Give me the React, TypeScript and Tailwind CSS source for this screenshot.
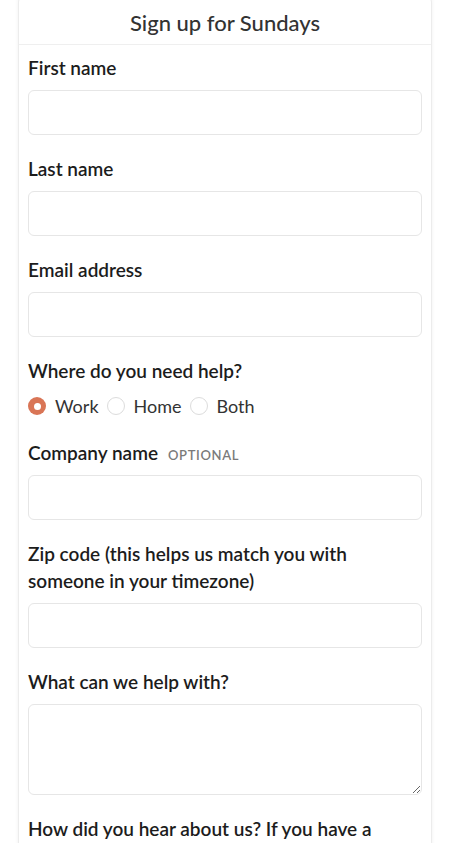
import React, { useState } from "react";

const font = { fontFamily: "Lato, 'Noto Sans', sans-serif" };

function Field({
  label,
  optional,
  children,
}: {
  label: React.ReactNode;
  optional?: boolean;
  children: React.ReactNode;
}) {
  return (
    <div className="flex flex-col gap-[9px]">
      <label className="text-[19px] leading-[27px] font-semibold text-[#1c1c1c]">
        {label}
        {optional && (
          <span className="ml-[10px] text-[13px] leading-none font-semibold tracking-[0.05em] text-[#7a7a7a]">
            OPTIONAL
          </span>
        )}
      </label>
      {children}
    </div>
  );
}

const inputClass =
  "w-full h-[45px] rounded-[6px] border border-[#e6e6e6] bg-white px-3 text-[16px] outline-none";

export default function App() {
  const [where, setWhere] = useState("work");

  return (
    <div className="min-h-[843px] bg-white" style={font}>
      <div className="mx-[18px] -mt-[6px] rounded-[8px] border border-[#ececec] bg-white shadow-[0_0_4px_rgba(0,0,0,0.06)]">
        <div className="h-[50px] pt-[6px] flex items-center justify-center border-b border-[#efefef]">
          <h1 className="text-[22px] font-medium text-[#333]">Sign up for Sundays</h1>
        </div>

        <div className="px-[9px] pt-[9px] pb-6 flex flex-col gap-[20px]">
          <Field label="First name">
            <input className={inputClass} />
          </Field>
          <Field label="Last name">
            <input className={inputClass} />
          </Field>
          <Field label="Email address">
            <input className={inputClass} />
          </Field>
          <Field label="Where do you need help?">
            <div className="flex items-center h-[26px] gap-[8px] text-[18px] leading-[26px] text-[#333]">
              {[
                ["work", "Work"],
                ["home", "Home"],
                ["both", "Both"],
              ].map(([id, text]) => (
                <button
                  key={id}
                  onClick={() => setWhere(id)}
                  className="flex items-center gap-[9px]"
                >
                  {where === id ? (
                    <span className="w-[18px] h-[18px] rounded-full bg-[#d97556] flex items-center justify-center">
                      <span className="w-[7px] h-[7px] rounded-full bg-white" />
                    </span>
                  ) : (
                    <span className="w-[18px] h-[18px] rounded-full border border-[#dcdcdc] bg-white" />
                  )}
                  {text}
                </button>
              ))}
            </div>
          </Field>
          <Field label="Company name" optional>
            <input className={inputClass} />
          </Field>
          <Field label="Zip code (this helps us match you with someone in your timezone)">
            <input className={inputClass} />
          </Field>
          <Field label="What can we help with?">
            <textarea className="w-full h-[91px] rounded-[6px] border border-[#e6e6e6] bg-white px-3 py-2 text-[16px] outline-none block" />
          </Field>
          <Field label="How did you hear about us? If you have a referral code, please enter it here">
            <input className={inputClass} />
          </Field>
        </div>
      </div>
    </div>
  );
}
